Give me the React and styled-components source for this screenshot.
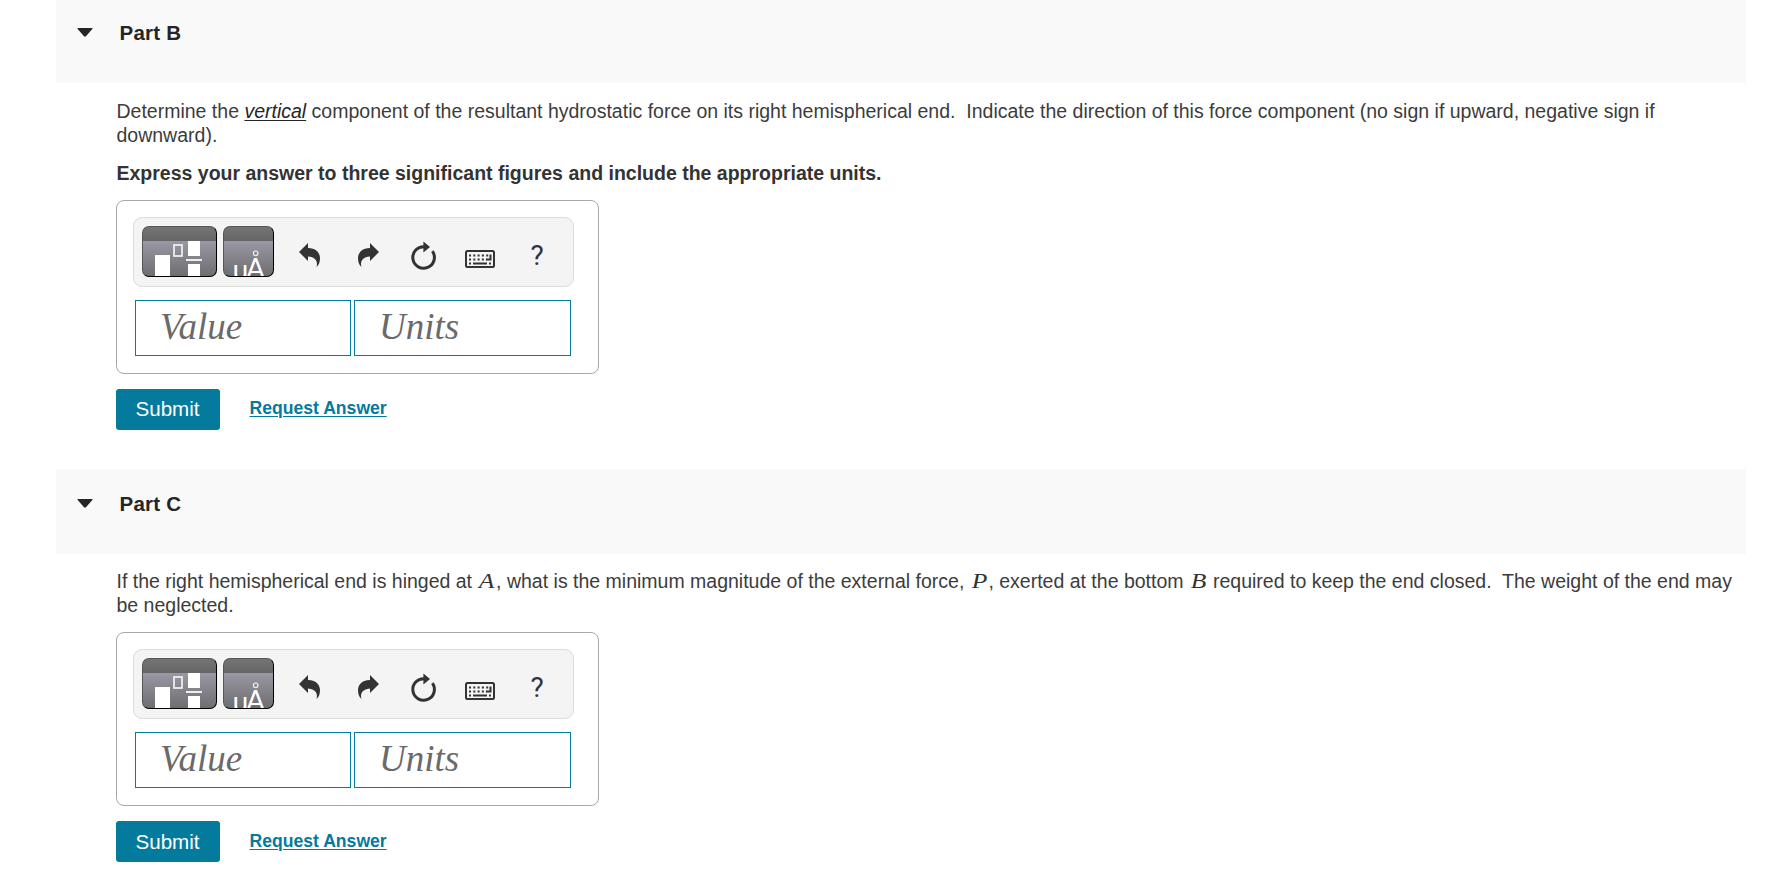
import React from 'react';
import styled, { createGlobalStyle } from 'styled-components';

const Global = createGlobalStyle`
  *, *::before, *::after { box-sizing: border-box; }
  body { margin: 0; background: #fff; font-family: "Liberation Sans", Arial, sans-serif; }
`;

const Page = styled.main`
  width: 1768px;
  height: 891px;
  overflow: hidden;
  padding: 0 22px 0 56px;
`;

const Header = styled.header`
  display: flex;
  align-items: flex-start;
  height: ${(p) => p.$height}px;
  padding: ${(p) => p.$top}px 0 0 21px;
  background: #f9f9f9;
  color: #252525;
`;

const Caret = styled.svg`
  width: 16px;
  height: 9px;
  margin: 7px 26.6px 0 0;
  fill: #252525;
`;

const Title = styled.h2`
  margin: 0;
  font-size: 20.5px;
  line-height: 24px;
  font-weight: 700;
  letter-spacing: 0.2px;
`;

const Body = styled.section`
  padding: ${(p) => p.$top}px 0 0 60px;
`;

const Question = styled.p`
  margin: 0;
  padding-left: 0.5px;
  font-size: 19.5px;
  line-height: 24px;
  letter-spacing: 0;
  color: #3c3c3c;
  white-space: pre-wrap;
`;

const Emphasis = styled.em`
  color: #252525;
  text-decoration: underline;
  text-decoration-thickness: 1px;
  text-underline-offset: 2px;
`;

const Variable = styled.i`
  display: inline-block;
  font-family: "Liberation Serif", "Times New Roman", serif;
  font-size: 22px;
  line-height: 20px;
  padding: 0 2.4px 0 2.8px;
  transform: scaleX(1.16);
  color: #333;
`;

const Instruction = styled.p`
  margin: 14px 0 0;
  padding-left: 0.5px;
  font-size: 19.5px;
  line-height: 24px;
  font-weight: 700;
  color: #333;
`;

const AnswerBox = styled.div`
  width: 483px;
  height: 174px;
  margin-top: ${(p) => p.$gap}px;
  padding: 16px;
  border: 1px solid #a8a8a8;
  border-radius: 8px;
`;

const Toolbar = styled.div`
  display: flex;
  align-items: flex-start;
  width: 441px;
  height: 70px;
  padding: 8px;
  border: 1px solid #dcdcdc;
  border-radius: 9px;
  background: #f4f4f4;
`;

const PaletteButton = styled.button`
  flex: none;
  width: ${(p) => p.$width}px;
  height: 51px;
  margin: 0 6px 0 0;
  padding: 0;
  border: 1px solid;
  border-color: #555 #000 #000 #555;
  border-radius: 7px;
  overflow: hidden;
  background: linear-gradient(#747474, #666) 0 0 / 100% 14px no-repeat,
    linear-gradient(#9a98a4, #6e6e70) 0 14px / 100% 35px no-repeat;
`;

const Art = styled.svg`
  display: block;
`;

const Tools = styled.div`
  display: flex;
  margin-left: 2px;
`;

const Fields = styled.div`
  display: flex;
  gap: 3px;
  margin: 13px 0 0 2px;
`;

const Field = styled.input`
  width: ${(p) => p.$width}px;
  height: 56px;
  margin: 0;
  padding: 0 24px 3px;
  border: 1px solid #047a9c;
  border-radius: 0;
  outline: none;
  background: #fff;
  font: italic 37px "Liberation Serif", "Times New Roman", serif;
  &::placeholder { color: #6a6a6a; opacity: 1; }
`;

const Actions = styled.div`
  display: flex;
  margin-top: 15px;
`;

const Submit = styled.button`
  width: 104px;
  height: 41px;
  margin: 0 29.5px 0 0;
  padding: 0 1px ${(p) => (p.$lowered ? 0 : 2)}px 0;
  border: 0;
  border-radius: 3px;
  background: #047a9c;
  color: #fff;
  font: 20.6px "Liberation Sans", Arial, sans-serif;
`;

const Request = styled.a`
  margin-top: ${(p) => (p.$lowered ? 9 : 8)}px;
  font-size: 17.6px;
  line-height: 22px;
  font-weight: 700;
  color: #047a9c;
  text-decoration: underline;
  text-decoration-thickness: 1px;
  text-underline-offset: 2px;
`;

function TemplatesArt() {
  return (
    <Art width="73" height="49" viewBox="0 0 73 49">
      <rect x="12" y="28" width="15" height="21" fill="#fff" />
      <rect x="31" y="18" width="8" height="11" fill="none" stroke="#eee" strokeWidth="1.8" />
      <rect x="45" y="14" width="12" height="15" fill="#fff" />
      <rect x="43" y="32" width="16" height="2" fill="#eee" />
      <rect x="45" y="37" width="12" height="12" fill="#fff" />
    </Art>
  );
}

const Glyph = styled.text`
  font: 28px Lato, sans-serif;
  fill: #fff;
`;

const Help = styled.text`
  font: 28px Roboto, sans-serif;
  fill: #333;
`;

function UnitsArt() {
  return (
    <Art width="49" height="49" viewBox="0 0 49 49">
      <Glyph x="8.5" y="53">μ</Glyph>
      <Glyph x="22" y="51.5">A</Glyph>
      <circle cx="31.7" cy="26.3" r="2.3" fill="none" stroke="#eee" strokeWidth="1.2" />
    </Art>
  );
}

/* Undo, redo, reset, keyboard and help share one drawing strip. */
function ToolIcons() {
  return (
    <Art width="270" height="51" viewBox="0 0 270 51">
      <path fill="#333" d="M17 26 26 17V22C35 22 38 28 38 32C38 36 37 39 34.5 41C36 36 34 31 26 30.5V35Z" />
      <path fill="#333" d="M97 26 88 17V22C79 22 76 28 76 32C76 36 77 39 79.5 41C78 36 80 31 88 30.5V35Z" />
      <path fill="none" stroke="#333" strokeWidth="3" d="M142.5 20.7A10.8 10.8 0 1 0 150.4 25.2" />
      <path fill="#333" d="M141.4 15.5 148 21 141.4 26.5Z" />
      <g fill="none" stroke="#333" strokeWidth="2">
        <rect x="184" y="25" width="28" height="16" rx="1.5" />
        <path strokeDasharray="2 2.3" d="M187 29.5H207M187 33.5H205M187 37.5H189.5M207 37.5H209.5" />
        <path d="M191 37.5H205M208.5 28.5V33.5H204" />
      </g>
      <Help x="248.6" y="39">?</Help>
    </Art>
  );
}

function Answer({ lowered }) {
  return (
    <>
      <AnswerBox $gap={15}>
        <Toolbar>
          <PaletteButton $width={75} aria-label="Templates"><TemplatesArt /></PaletteButton>
          <PaletteButton $width={51} aria-label="Symbols"><UnitsArt /></PaletteButton>
          <Tools><ToolIcons /></Tools>
        </Toolbar>
        <Fields>
          <Field $width={216} placeholder="Value" />
          <Field $width={217} placeholder="Units" />
        </Fields>
      </AnswerBox>
      <Actions>
        <Submit $lowered={lowered}>Submit</Submit>
        <Request $lowered={lowered}>Request Answer</Request>
      </Actions>
    </>
  );
}

function PartHeader({ title, height, top }) {
  return (
    <Header $height={height} $top={top}>
      <Caret viewBox="0 0 16 9"><path d="M1 0H15Q16 0 15.3 1L9 8.3Q8 9.2 7 8.3L.7 1Q0 0 1 0Z" /></Caret>
      <Title>{title}</Title>
    </Header>
  );
}

const Part = styled.article`
  height: 469px;
`;

export default function App() {
  return (
    <>
      <Global />
      <Page>
        <Part>
          <PartHeader title="Part B" height={83} top={21} />
          <Body $top={16}>
            <Question>
              Determine the <Emphasis>vertical</Emphasis> component of the resultant hydrostatic force on its right hemispherical end.{'  '}Indicate the direction of this force component (no sign if upward, negative sign if downward).
            </Question>
            <Instruction>Express your answer to three significant figures and include the appropriate units.</Instruction>
            <Answer />
          </Body>
        </Part>
        <Part>
          <PartHeader title="Part C" height={85} top={23} />
          <Body $top={15}>
            <Question>
              If the right hemispherical end is hinged at <Variable>A</Variable>, what is the minimum magnitude of the external force, <Variable>P</Variable>, exerted at the bottom <Variable>B</Variable> required to keep the end closed.{'  '}The weight of the end may be neglected.
            </Question>
            <Answer lowered />
          </Body>
        </Part>
      </Page>
    </>
  );
}
